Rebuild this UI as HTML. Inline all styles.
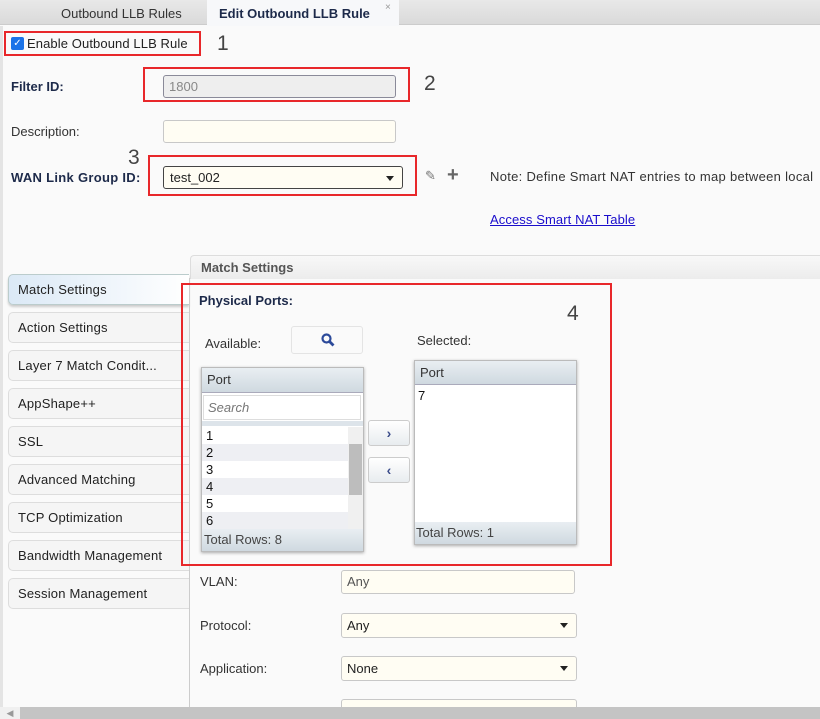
<!DOCTYPE html><html><head><style>
*{box-sizing:border-box;margin:0;padding:0}
body{width:820px;height:719px;overflow:hidden;background:#fafafa;font-family:"Liberation Sans",sans-serif;font-size:13px;color:#222;position:relative}
.a{position:absolute;white-space:nowrap}
.red{position:absolute;border:2px solid #e8272a}
.num{position:absolute;font-size:21px;color:#444}
.inp{position:absolute;border:1px solid #c8c8c8;border-radius:3px;background:#fffdf3}
.lbl{position:absolute;color:#333}
.b{font-weight:bold;color:#1d2a4a}
.tab{position:absolute;left:8px;width:181px;height:31px;border:1px solid #ddd;border-right:none;border-radius:5px 0 0 5px;background:#f5f5f5;padding-left:9px;line-height:29px;color:#222;letter-spacing:0.2px}
.caret{position:absolute;right:8px;top:9px;width:0;height:0;border-left:4px solid transparent;border-right:4px solid transparent;border-top:5px solid #222}
.grid{position:absolute;border:1px solid #bbb;background:#fff;box-shadow:0 1px 3px #aaa}
.gh{position:absolute;left:0;right:0;background:linear-gradient(#e9eef2,#cfd9e0);color:#333;padding-left:5px}
.btn{position:absolute;width:42px;height:26px;border:1px solid #ccc;border-radius:3px;background:linear-gradient(#fff,#e8ecef);color:#3b4c8a;font-weight:bold;text-align:center;line-height:24px;font-size:14px}
</style></head><body>
<div class="a" style="left:0;top:0;width:820px;height:25px;background:linear-gradient(#e8e8e8,#dadada);border-bottom:1px solid #ccc"></div>
<div class="a" style="left:61px;top:6px;color:#333">Outbound LLB Rules</div>
<div class="a" style="left:207px;top:0;width:192px;height:26px;background:#f7f8fa"></div>
<div class="a" style="left:219px;top:6px;font-weight:bold;color:#1d2a4a">Edit Outbound LLB Rule</div>
<div class="a" style="left:385px;top:2px;font-size:10px;color:#999">×</div>
<div class="a" style="left:0;top:26px;width:3px;height:681px;background:#e4e4e4"></div>

<div class="a" style="left:11px;top:37px;width:13px;height:13px;background:#1a73e8;border-radius:2px;color:#fff;font-size:10px;line-height:13px;text-align:center">✓</div>
<div class="a" style="left:27px;top:36px;color:#222;letter-spacing:0.1px">Enable Outbound LLB Rule</div>
<div class="red" style="left:4px;top:31px;width:197px;height:25px"></div>
<div class="num" style="left:217px;top:32px">1</div>

<div class="lbl b" style="left:11px;top:79px">Filter ID:</div>
<div class="inp" style="left:163px;top:75px;width:233px;height:23px;background:#eee;border-color:#8a8a99;color:#888;padding:3px 5px">1800</div>
<div class="red" style="left:143px;top:67px;width:267px;height:35px"></div>
<div class="num" style="left:424px;top:72px">2</div>

<div class="lbl" style="left:11px;top:124px">Description:</div>
<div class="inp" style="left:163px;top:120px;width:233px;height:23px"></div>

<div class="num" style="left:128px;top:146px">3</div>
<div class="lbl b" style="left:11px;top:170px;letter-spacing:0.3px">WAN Link Group ID:</div>
<div class="inp" style="left:163px;top:166px;width:240px;height:23px;border-color:#444;color:#222;padding:3px 6px">test_002<div class="caret"></div></div>
<div class="red" style="left:148px;top:155px;width:269px;height:41px"></div>
<div class="a" style="left:425px;top:168px;color:#777;font-size:13px">✎</div>
<div class="a" style="left:447px;top:164px;color:#666;font-size:20px;font-weight:bold">+</div>
<div class="a" style="left:490px;top:169px;color:#333;letter-spacing:0.3px">Note: Define Smart NAT entries to map between local</div>
<div class="a" style="left:490px;top:212px;color:#1a0dcc;text-decoration:underline;letter-spacing:0.1px">Access Smart NAT Table</div>

<div class="a" style="left:190px;top:255px;width:630px;height:24px;background:linear-gradient(#f8f8f8,#ececec);border-top:1px solid #ddd;border-left:1px solid #ddd;border-radius:4px 0 0 0;padding:4px 10px;font-weight:bold;color:#555">Match Settings</div>
<div class="a" style="left:189px;top:278px;width:1px;height:429px;background:#ccc"></div>

<div class="tab" style="top:274px;background:linear-gradient(90deg,#dbe9f6,#fff);border-color:#bcc;box-shadow:0 2px 2px #ccc">Match Settings</div>
<div class="tab" style="top:312px">Action Settings</div>
<div class="tab" style="top:350px">Layer 7 Match Condit...</div>
<div class="tab" style="top:388px">AppShape++</div>
<div class="tab" style="top:426px">SSL</div>
<div class="tab" style="top:464px">Advanced Matching</div>
<div class="tab" style="top:502px">TCP Optimization</div>
<div class="tab" style="top:540px">Bandwidth Management</div>
<div class="tab" style="top:578px">Session Management</div>

<div class="red" style="left:181px;top:283px;width:431px;height:283px"></div>
<div class="lbl b" style="left:199px;top:293px">Physical Ports:</div>
<div class="num" style="left:567px;top:302px">4</div>
<div class="lbl" style="left:205px;top:336px">Available:</div>
<div class="a" style="left:291px;top:326px;width:72px;height:28px;border:1px solid #e4e4e4;border-radius:3px;background:#fafafa"><svg width="14" height="14" style="position:absolute;left:29px;top:6px"><circle cx="5.5" cy="5.5" r="4" fill="none" stroke="#2c4a9a" stroke-width="2.2"/><line x1="8.5" y1="8.5" x2="12.5" y2="12.5" stroke="#2c4a9a" stroke-width="2.8"/></svg></div>
<div class="lbl" style="left:417px;top:333px">Selected:</div>

<div class="grid" style="left:201px;top:367px;width:163px;height:185px">
<div class="gh" style="top:0;height:25px;line-height:24px;border-bottom:1px solid #aab">Port</div>
<div class="a" style="left:1px;top:27px;width:158px;height:25px;background:#fff;border:1px solid #ddd;color:#777;font-style:italic;padding:4px 4px">Search</div>
<div class="a" style="left:0;top:53px;width:161px;height:5px;background:#dde4ea"></div>
<div class="a" style="left:0;top:59px;width:146px;line-height:17px;color:#111">
<div style="padding-left:4px;background:#fff">1</div><div style="padding-left:4px;background:#eeeff3">2</div><div style="padding-left:4px;background:#fff">3</div><div style="padding-left:4px;background:#eeeff3">4</div><div style="padding-left:4px;background:#fff">5</div><div style="padding-left:4px;background:#eeeff3">6</div></div>
<div class="a" style="left:146px;top:59px;width:15px;height:102px;background:#f0f0f0"></div>
<div class="a" style="left:147px;top:76px;width:13px;height:51px;background:#bdbdbd"></div>
<div class="gh" style="top:161px;height:22px;line-height:22px;padding-left:2px;color:#444">Total Rows: 8</div>
</div>

<div class="btn" style="left:368px;top:420px">›</div>
<div class="btn" style="left:368px;top:457px">‹</div>

<div class="grid" style="left:414px;top:360px;width:163px;height:185px">
<div class="gh" style="top:0;height:24px;line-height:23px;border-bottom:1px solid #aab">Port</div>
<div class="a" style="left:3px;top:27px;color:#111">7</div>
<div class="gh" style="top:161px;height:22px;line-height:22px;padding-left:1px;color:#444">Total Rows: 1</div>
</div>

<div class="lbl" style="left:200px;top:574px">VLAN:</div>
<div class="inp" style="left:341px;top:570px;width:234px;height:24px;padding:3px 5px;color:#555">Any</div>
<div class="lbl" style="left:200px;top:618px">Protocol:</div>
<div class="inp" style="left:341px;top:613px;width:236px;height:25px;padding:4px 5px;color:#222">Any<div class="caret"></div></div>
<div class="lbl" style="left:200px;top:661px">Application:</div>
<div class="inp" style="left:341px;top:656px;width:236px;height:25px;padding:4px 5px;color:#222">None<div class="caret"></div></div>
<div class="inp" style="left:341px;top:699px;width:236px;height:20px"></div>

<div class="a" style="left:0;top:707px;width:820px;height:12px;background:#c4c4c4"></div>
<div class="a" style="left:0;top:707px;width:20px;height:12px;background:#f0f0f0;color:#999;font-size:9px;text-align:center;line-height:12px">◀</div>
</body></html>
